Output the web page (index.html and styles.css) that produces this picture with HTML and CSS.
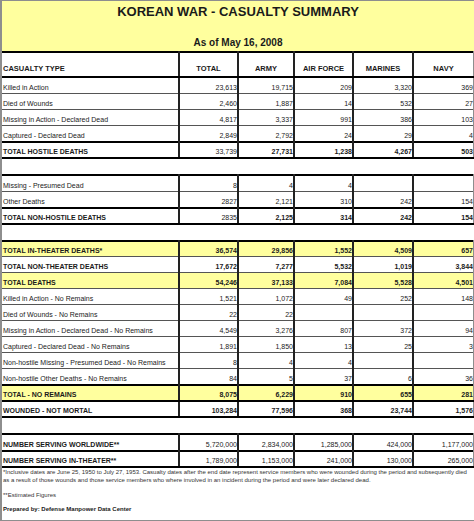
FILE: index.html
```html
<!DOCTYPE html>
<html lang="en">
<head>
    <meta charset="UTF-8">
    <title>Korean War - Casualty Summary</title>
    <link rel="stylesheet" href="styles.css">
</head>
<body>

<div class="sheet">
    <div class="title-band">
        <h1>KOREAN WAR - CASUALTY SUMMARY</h1>
        <h2>As of May 16, 2008</h2>
    </div>

    <table class="casualties">
        <colgroup>
            <col class="c-type">
            <col class="c-total">
            <col class="c-army">
            <col class="c-af">
            <col class="c-mar">
            <col class="c-navy">
        </colgroup>
        <tr class="head">
            <td class="label">CASUALTY TYPE</td>
            <td>TOTAL</td>
            <td>ARMY</td>
            <td>AIR FORCE</td>
            <td>MARINES</td>
            <td>NAVY</td>
        </tr>
        <tr><td class="label">Killed in Action</td><td>23,613</td><td>19,715</td><td>209</td><td>3,320</td><td>369</td></tr>
        <tr><td class="label">Died of Wounds</td><td>2,460</td><td>1,887</td><td>14</td><td>532</td><td>27</td></tr>
        <tr><td class="label">Missing in Action - Declared Dead</td><td>4,817</td><td>3,337</td><td>991</td><td>386</td><td>103</td></tr>
        <tr><td class="label">Captured - Declared Dead</td><td>2,849</td><td>2,792</td><td>24</td><td>29</td><td>4</td></tr>
        <tr class="total boxed"><td class="label">TOTAL HOSTILE DEATHS</td><td class="plain">33,739</td><td>27,731</td><td>1,238</td><td>4,267</td><td>503</td></tr>
        <tr class="gap"><td colspan="6"></td></tr>
        <tr class="boxed-top"><td class="label">Missing - Presumed Dead</td><td>8</td><td>4</td><td>4</td><td></td><td></td></tr>
        <tr><td class="label">Other Deaths</td><td>2827</td><td>2,121</td><td>310</td><td>242</td><td>154</td></tr>
        <tr class="total boxed"><td class="label">TOTAL NON-HOSTILE DEATHS</td><td class="plain">2835</td><td>2,125</td><td>314</td><td>242</td><td>154</td></tr>
        <tr class="gap"><td colspan="6"></td></tr>
        <tr class="total hl boxed-top"><td class="label">TOTAL IN-THEATER DEATHS*</td><td>36,574</td><td>29,856</td><td>1,552</td><td>4,509</td><td>657</td></tr>
        <tr class="total"><td class="label">TOTAL NON-THEATER DEATHS</td><td>17,672</td><td>7,277</td><td>5,532</td><td>1,019</td><td>3,844</td></tr>
        <tr class="total hl"><td class="label">TOTAL DEATHS</td><td>54,246</td><td>37,133</td><td>7,084</td><td>5,528</td><td>4,501</td></tr>
        <tr><td class="label">Killed in Action - No Remains</td><td>1,521</td><td>1,072</td><td>49</td><td>252</td><td>148</td></tr>
        <tr><td class="label">Died of Wounds - No Remains</td><td>22</td><td>22</td><td></td><td></td><td></td></tr>
        <tr><td class="label">Missing in Action - Declared Dead - No Remains</td><td>4,549</td><td>3,276</td><td>807</td><td>372</td><td>94</td></tr>
        <tr><td class="label">Captured - Declared Dead - No Remains</td><td>1,891</td><td>1,850</td><td>13</td><td>25</td><td>3</td></tr>
        <tr><td class="label">Non-hostile Missing - Presumed Dead - No Remains</td><td>8</td><td>4</td><td>4</td><td></td><td></td></tr>
        <tr><td class="label">Non-hostile Other Deaths - No Remains</td><td>84</td><td>5</td><td>37</td><td>6</td><td>36</td></tr>
        <tr class="total hl boxed"><td class="label">TOTAL - NO REMAINS</td><td>8,075</td><td>6,229</td><td>910</td><td>655</td><td>281</td></tr>
        <tr class="total boxed"><td class="label">WOUNDED - NOT MORTAL</td><td>103,284</td><td>77,596</td><td>368</td><td>23,744</td><td>1,576</td></tr>
        <tr class="gap"><td colspan="6"></td></tr>
        <tr class="total boxed-top"><td class="label">NUMBER SERVING WORLDWIDE**</td><td class="plain">5,720,000</td><td class="plain">2,834,000</td><td class="plain">1,285,000</td><td class="plain">424,000</td><td class="plain">1,177,000</td></tr>
        <tr class="total boxed"><td class="label">NUMBER SERVING IN-THEATER**</td><td class="plain">1,789,000</td><td class="plain">1,153,000</td><td class="plain">241,000</td><td class="plain">130,000</td><td class="plain">265,000</td></tr>
    </table>

    <div class="notes">
        <p class="fine">*Inclusive dates are June 25, 1950 to July 27, 1953. Casualty dates after the end date represent service members who were wounded during the period and subsequently died<br>
        as a result of those wounds and those service members who where involved in an incident during the period and were later declared dead.</p>
        <p class="est">**Estimated Figures</p>
        <p class="prepared">Prepared by: Defense Manpower Data Center</p>
    </div>
</div>

</body>
</html>
```

FILE: styles.css
```css
:root {
    --yellow: #ffff9e;
    --edge: #8e8e8e;
    --ink: #1a1a1a;
}

body {
    margin: 0;
    padding: 0;
    background: #fff;
    font-family: "Liberation Sans", Arial, sans-serif;
    color: var(--ink);
}

.sheet {
    width: 472px;
    height: 519px;
    border-left: 2px solid var(--edge);
    border-top: 1px solid var(--edge);
    border-bottom: 1px solid var(--edge);
    overflow: hidden;
}

/* Titel */
.title-band {
    background: var(--yellow);
    height: 50px;
    text-align: center;
    overflow: hidden;
}

.title-band h1 {
    margin: 0;
    padding-top: 3px;
    font-size: 13px;
    line-height: 15px;
}

.title-band h2 {
    margin: 0;
    padding-top: 18px;
    font-size: 10px;
    line-height: 12px;
}

/* Tabel */
.casualties {
    border-collapse: collapse;
    table-layout: fixed;
    width: 472px;
    font-size: 7px;
}

.c-type { width: 177px; }
.c-total { width: 59px; }
.c-army { width: 56px; }
.c-af { width: 59px; }
.c-mar { width: 60px; }
.c-navy { width: 61px; }

.casualties td {
    height: 14px;
    padding: 0 0 1px 0;
    line-height: 8px;
    vertical-align: bottom;
    text-align: right;
    white-space: nowrap;
    overflow: hidden;
    border-top: 1px solid #555;
    border-bottom: 1px solid #555;
    border-left: 2px solid #222;
    border-right: 2px solid #222;
}

.casualties td.label {
    text-align: left;
    padding-left: 1px;
    border-left: none;
}

.casualties tr td:last-child {
    border-right: 2px solid var(--edge);
}

.head td {
    height: 20px;
    padding-bottom: 3px;
    text-align: center;
    font-weight: bold;
    font-size: 7.5px;
    border-top: 2px solid #000;
    border-bottom: 2px solid #000;
}

.total td {
    font-weight: bold;
}

.total td.plain {
    font-weight: normal;
}

.hl td {
    background: var(--yellow);
}

.boxed td {
    height: 13px;
    border-top: 2px solid #000;
    border-bottom: 2px solid #000;
}

.boxed-top td {
    border-top: 2px solid #000;
}

.hl.boxed-top td {
    height: 13px;
}

.casualties tr.gap td {
    border-left: none;
    border-right: none;
}

/* Voetnoten */
.notes {
    padding: 0 0 0 1px;
    font-size: 6px;
    line-height: 8px;
    color: #333;
}

.notes p {
    margin: 0;
    white-space: nowrap;
}

.notes .est {
    margin-top: 7px;
}

.notes .prepared {
    margin-top: 6px;
    font-weight: bold;
    font-size: 6px;
    color: var(--ink);
}
```
